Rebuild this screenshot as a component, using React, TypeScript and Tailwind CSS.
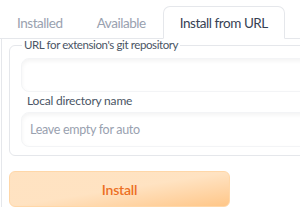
const TABS = ['Installed', 'Available', 'Install from URL'];

export default function App() {
  const active = 'Install from URL';

  return (
    <div className="h-[221px] w-[300px] overflow-hidden bg-white font-['Lato',sans-serif]">
      <div className="w-[330px]">
        {/* tab strip */}
        <div className="flex h-[39px] items-end border-b border-gray-200">
          {TABS.map((tab) => (
            <button
              key={tab}
              type="button"
              className={`-mb-px h-[33px] px-4 text-[13.5px] leading-[20px] tracking-[-0.45px] ${
                tab === active
                  ? 'rounded-t-[7px] border border-gray-200 border-b-white bg-white text-gray-700'
                  : 'border border-transparent text-gray-400'
              }`}
            >
              {tab}
            </button>
          ))}
        </div>

        {/* tab panel */}
        <div className="ml-px border-l border-gray-200 px-[7px]">
          <fieldset className="rounded-md border border-gray-200 px-[11px] pb-[8px]">
            <legend className="ml-px px-[2px] text-[11.5px] leading-[12px] tracking-[-0.4px] text-gray-600">
              URL for extension's git repository
            </legend>
            <input
              type="text"
              className="mt-[7px] block h-[34px] w-full rounded-lg border border-gray-100 bg-white px-[8px] text-[13px] shadow-inner outline-none"
            />
            <label className="mt-[2px] block pl-[6px] text-[12px] leading-[14px] tracking-[-0.2px] text-gray-600">
              Local directory name
            </label>
            <input
              type="text"
              placeholder="Leave empty for auto"
              className="mt-[4px] block h-[35px] w-full rounded-lg border border-gray-100 bg-white px-[8px] text-[12.5px] tracking-[-0.3px] shadow-inner outline-none placeholder:text-gray-400"
            />
          </fieldset>

          <button
            type="button"
            className="mt-[15px] h-[36px] w-[221px] rounded-md border border-orange-200 bg-gradient-to-br from-orange-200/70 via-orange-200/70 to-orange-300/80 text-[14px] font-semibold tracking-[-0.2px] text-[#ec6f22]"
          >
            Install
          </button>
        </div>
      </div>
    </div>
  );
}
